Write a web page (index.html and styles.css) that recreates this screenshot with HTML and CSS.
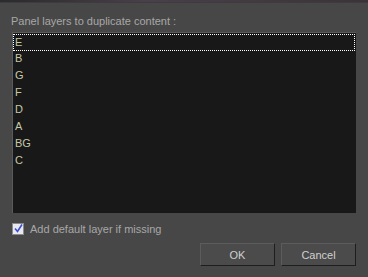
FILE: index.html
```html
<!DOCTYPE html>
<html lang="en">
<head>
    <meta charset="UTF-8">
    <title>Duplicate Content</title>
    <link rel="stylesheet" href="styles.css">
</head>
<body>
    <div class="top-edge"></div>
    <div class="dialog">
        <div class="label">Panel layers to duplicate content :</div>
        <div class="layer-list">
            <div class="layer-item focused">E</div>
            <div class="layer-item">B</div>
            <div class="layer-item">G</div>
            <div class="layer-item">F</div>
            <div class="layer-item">D</div>
            <div class="layer-item">A</div>
            <div class="layer-item">BG</div>
            <div class="layer-item">C</div>
        </div>
        <label class="check-row">
            <span class="checkbox">
                <svg width="9" height="9" viewBox="0 0 9 9"><path d="M1 4.5 L3.5 7.5 L8 0.5" fill="none" stroke="#3b4fd0" stroke-width="1.6"/></svg>
            </span>
            Add default layer if missing
        </label>
        <div class="buttons">
            <button class="btn">OK</button>
            <button class="btn">Cancel</button>
        </div>
    </div>
</body>
</html>
```

FILE: styles.css
```css
* {
    margin: 0;
    padding: 0;
    box-sizing: border-box;
}

body {
    font-family: "Liberation Sans", Arial, sans-serif;
    font-size: 11px;
    background: #474747;
    color: #a8a8a8;
    width: 368px;
    height: 277px;
    overflow: hidden;
}

.top-edge {
    height: 3px;
    background: linear-gradient(90deg, #2b2a2c 0%, #4a3f4a 40%, #3a3338 100%);
    border-bottom: 1px solid #3c3c3c;
}

.dialog {
    padding: 11px 12px 0 12px;
}

.label {
    height: 14px;
    line-height: 14px;
    padding-left: 0;
    margin-left: -1px;
}

.layer-list {
    margin-top: 4px;
    height: 181px;
    width: 344px;
    background: #181818;
    border-left: 1px solid #5a5a5a;
    border-top: 1px solid #5a5a5a;
    padding-top: 1px;
}

.layer-item {
    height: 17px;
    line-height: 15px;
    padding-left: 2px;
    color: #c6c9a8;
    font-size: 11px;
}

.layer-item.focused {
    border: 1px dotted #ffffff;
    margin-right: 1px;
    padding-left: 1px;
}

.check-row {
    display: flex;
    align-items: center;
    gap: 6px;
    margin-top: 9px;
    height: 13px;
    color: #a8a8a8;
}

.checkbox {
    width: 12px;
    height: 12px;
    background: #e8e8ee;
    border: 1px solid #8a8a8a;
    display: flex;
    align-items: center;
    justify-content: center;
}

.buttons {
    display: flex;
    justify-content: flex-end;
    gap: 6px;
    margin-top: 8px;
    margin-right: 0;
    width: 344px;
}

.btn {
    width: 75px;
    height: 23px;
    background: #4b4b4b;
    color: #d0d0d0;
    font-family: "Liberation Sans", Arial, sans-serif;
    font-size: 11px;
    border: 1px solid #5c5c5c;
    border-right-color: #1e1e1e;
    border-bottom-color: #1e1e1e;
}
```
